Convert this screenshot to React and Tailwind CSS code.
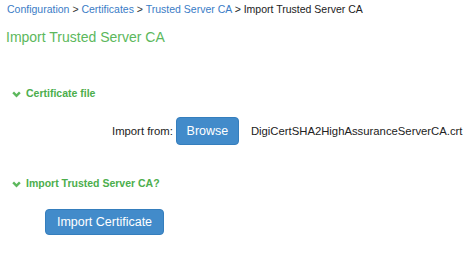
import React from "react";

function Chevron() {
  return (
    <svg width="9" height="7" viewBox="0 0 9 7" className="shrink-0">
      <path d="M0.3 2.2 L2.0 0.5 L4.5 3.0 L7.0 0.5 L8.7 2.2 L4.5 6.4 Z" fill="#5cb85c" />
    </svg>
  );
}

export default function App() {
  return (
    <div
      className="w-[474px] h-[253px] bg-white overflow-hidden"
      style={{ fontFamily: '"Liberation Sans", Arial, sans-serif' }}
    >
      <div className="pl-[7px] pt-[2px] text-[10.5px] leading-[14px] whitespace-nowrap">
        <span className="text-[#3a7cc6]">Configuration</span>
        <span className="text-[#333]"> &gt; </span>
        <span className="text-[#3a7cc6]">Certificates</span>
        <span className="text-[#333]"> &gt; </span>
        <span className="text-[#3a7cc6]">Trusted Server CA</span>
        <span className="text-[#222]"> &gt; Import Trusted Server CA</span>
      </div>
      <div className="pl-[6px] mt-[12px] text-[14px] leading-[18px] text-[#5cb85c]">
        Import Trusted Server CA
      </div>
      <div className="pl-[12px] mt-[41px] flex items-center gap-[5px] h-[14px]">
        <Chevron />
        <span className="text-[10.5px] font-bold text-[#4cae4c]">Certificate file</span>
      </div>
      <div className="mt-[16px] flex items-center h-[28px] text-[11.3px] text-[#222]">
        <span className="pl-[112px]">Import from:</span>
        <button className="ml-[3px] w-[63px] h-[28px] rounded-[4px] bg-[#428bca] border border-[#357ebd] text-white text-[12.5px] leading-none flex items-center justify-center">
          Browse
        </button>
        <span className="ml-[12px]">DigiCertSHA2HighAssuranceServerCA.crt</span>
      </div>
      <div className="pl-[12px] mt-[32px] flex items-center gap-[5px] h-[14px]">
        <Chevron />
        <span className="text-[10.5px] font-bold text-[#4cae4c]">Import Trusted Server CA?</span>
      </div>
      <div className="pl-[45px] mt-[18px]">
        <button className="w-[119px] h-[26px] rounded-[4px] bg-[#428bca] border border-[#357ebd] text-white text-[12.5px] leading-none flex items-center justify-center">
          Import Certificate
        </button>
      </div>
    </div>
  );
}
